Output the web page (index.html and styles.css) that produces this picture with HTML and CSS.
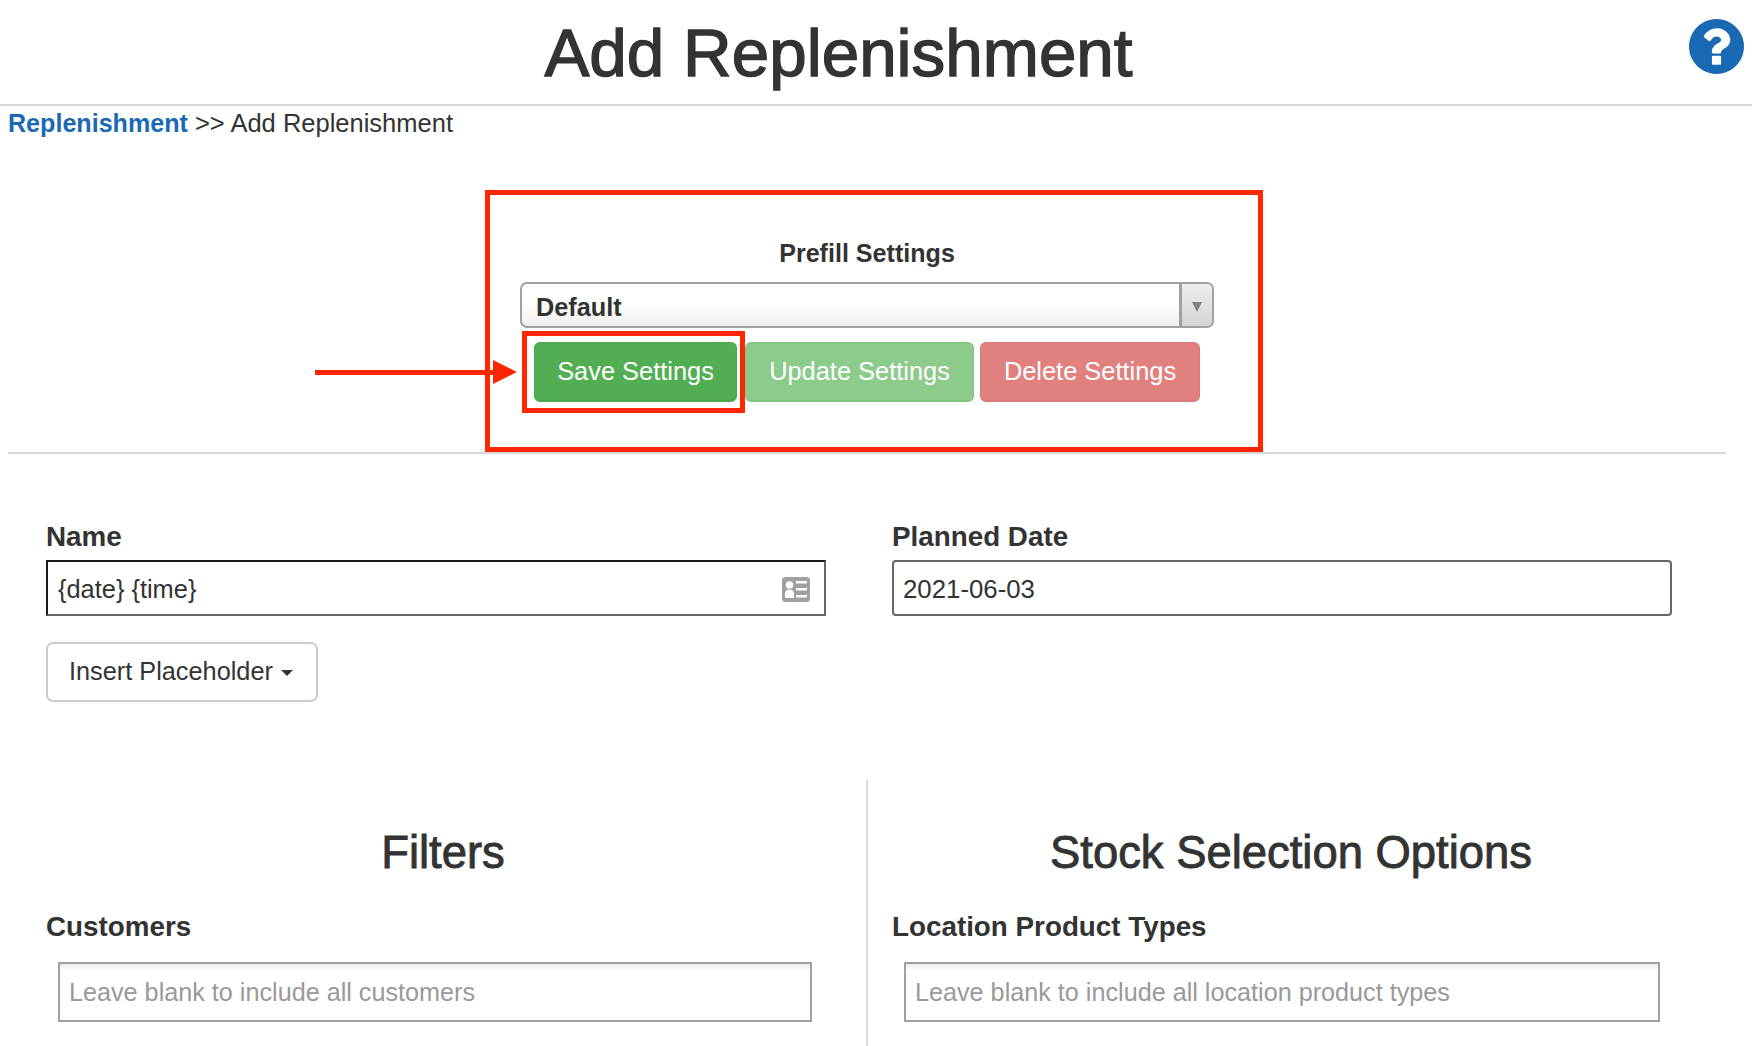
FILE: index.html
```html
<!DOCTYPE html>
<html lang="en">
<head>
<meta charset="utf-8">
<title>Add Replenishment</title>
<link rel="stylesheet" href="styles.css">
</head>
<body>
<div class="page">
  <header class="title-bar">
    <h1 class="page-title">Add Replenishment</h1>
    <a class="help" href="#" aria-label="Help">
      <svg class="help-icon" viewBox="128 128 1536 1536"><path d="M1024 1376v-192q0-14-9-23t-23-9h-192q-14 0-23 9t-9 23v192q0 14 9 23t23 9h192q14 0 23-9t9-23zm256-672q0-88-55.5-163t-138.5-116-170-41q-243 0-371 213-15 24 8 42l132 100q7 6 19 6 16 0 25-12 53-68 86-92 34-24 86-24 48 0 85.5 26t37.5 59q0 38-20 61t-68 45q-63 28-115.5 86.5t-52.5 125.5v36q0 14 9 23t23 9h192q14 0 23-9t9-23q0-19 21.5-49.5t54.5-49.5q32-18 49-28.5t46-35 44.5-48 28-60.5 12.5-81zm384 192q0 209-103 385.5t-279.5 279.5-385.5 103-385.5-103-279.5-279.5-103-385.5 103-385.5 279.5-279.5 385.5-103 385.5 103 279.5 279.5 103 385.5z"/></svg>
    </a>
  </header>

  <nav class="breadcrumb"><a href="#">Replenishment</a> &gt;&gt; Add Replenishment</nav>

  <main class="content">
    <section class="prefill">
      <div class="prefill-label">Prefill Settings</div>
      <div class="select">
        <span class="select-value">Default</span>
        <span class="select-arrow"><span class="select-caret"></span></span>
      </div>
      <div class="prefill-actions">
        <button class="btn btn-save" type="button">Save Settings</button>
        <button class="btn btn-update" type="button">Update Settings</button>
        <button class="btn btn-delete" type="button">Delete Settings</button>
      </div>
      <div class="callout callout-outer"></div>
      <div class="callout callout-inner"></div>
      <svg class="callout-arrow" viewBox="0 0 202 24"><rect x="0" y="10" width="182" height="5"/><path d="M178 0L202 12L178 24Z"/></svg>
    </section>

    <hr class="rule">

    <div class="fields">
      <div class="field">
        <label class="label">Name</label>
        <div class="input-wrap">
          <input class="text-input name-input" type="text" value="{date} {time}">
          <svg class="card-icon" viewBox="0 0 28 25"><rect width="28" height="25" rx="3.5" class="card-bg"/><circle cx="7.5" cy="8" r="3.8" class="card-fg"/><path class="card-fg" d="M3 21v-4.5c0-2.5 1.8-4 4.5-4s4.5 1.500 4.500 4V21z"/><rect x="14" y="4" width="11" height="2.500" class="card-fg"/><rect x="14" y="11" width="11" height="2.500" class="card-fg"/><rect x="14" y="18" width="11" height="2.500" class="card-fg"/></svg>
        </div>
        <button class="btn-default" type="button">Insert Placeholder <span class="caret"></span></button>
      </div>
      <div class="field">
        <label class="label">Planned Date</label>
        <input class="text-input date-input" type="text" value="2021-06-03">
      </div>
    </div>

    <div class="panels">
      <section class="panel panel-left">
        <h2 class="panel-title">Filters</h2>
        <label class="label panel-label">Customers</label>
        <input class="multi-input multi-left" type="text" placeholder="Leave blank to include all customers">
      </section>
      <section class="panel panel-right">
        <h2 class="panel-title">Stock Selection Options</h2>
        <label class="label panel-label">Location Product Types</label>
        <input class="multi-input multi-right" type="text" placeholder="Leave blank to include all location product types">
      </section>
    </div>
  </main>
</div>
</body>
</html>
```
FILE: styles.css
```css
* { box-sizing: border-box; }
html, body { margin: 0; padding: 0; background: #fff; }
body { font-family: "Liberation Sans", Arial, Helvetica, sans-serif; color: #333; font-size: 25.3px; }
.page { height: 1046px; overflow: hidden; display: flex; flex-direction: column; }

.title-bar { display: flex; align-items: flex-start; height: 106px; border-bottom: 2px solid #d8d8d8; padding-right: 8px; flex: none; }
.page-title { flex: 1; margin: 0; padding-top: 16px; text-align: center; font-size: 67.4px; line-height: 74px; font-weight: 400; color: #333; -webkit-text-stroke: 1.4px #333; padding-right: 12px; }
.help { display: block; margin-top: 19px; width: 55px; height: 55px; }
.help-icon { display: block; width: 55px; height: 55px; fill: #1a69b3; }

.breadcrumb { padding-left: 8px; height: 34px; line-height: 34px; font-size: 25.5px; color: #333; flex: none; }
.breadcrumb a { color: #1a69b3; font-weight: 700; font-size: 25.1px; text-decoration: none; }

.content { flex: 1; display: flex; flex-direction: column; padding: 0 26px 0 8px; min-height: 0; }

.prefill { position: relative; width: 694px; margin: 96px auto 0; flex: none; }
.prefill-label { text-align: center; font-weight: 700; font-size: 25.1px; line-height: 35px; height: 34px; margin-bottom: 12px; color: #333; }
.select { display: flex; height: 46px; border: 2px solid #a0a0a0; border-radius: 7px; background: linear-gradient(#fff 45%, #eee); }
.select-value { flex: 1; font-weight: 700; padding-left: 14px; line-height: 46px; color: #333; }
.select-arrow { width: 33px; border-left: 3px solid #a0a0a0; background: linear-gradient(#eee, #d4d4d4); border-radius: 0 5px 5px 0; display: flex; align-items: center; justify-content: center; padding-top: 3px; }
.select-caret { width: 0; height: 0; border-left: 5.5px solid transparent; border-right: 5.5px solid transparent; border-top: 10px solid #808080; }
.prefill-actions { display: flex; justify-content: center; gap: 8px; margin-top: 14px; padding-bottom: 50px; }
.btn { height: 60px; border: 1px solid transparent; border-bottom-width: 2px; border-radius: 6px; font: 25.4px "Liberation Sans", Arial, sans-serif; color: #fff; padding: 0; cursor: pointer; }
.btn-save { width: 203px; background: #51ae53; border-color: #4ca64e; }
.btn-update { width: 229px; background: #8ccb8c; border-color: #85c385; }
.btn-delete { width: 220px; margin-left: -2px; background: #e08180; border-color: #d97a79; }

.callout { position: absolute; border: 5px solid #ff2600; pointer-events: none; }
.callout-outer { left: -35px; top: -46px; width: 778px; height: 262px; }
.callout-inner { left: 2px; top: 95px; width: 223px; height: 82px; }
.callout-arrow { position: absolute; left: -205px; top: 124px; width: 202px; height: 24px; fill: #ff2600; }

.rule { margin: 0; border: 0; height: 2px; background: #d8d8d8; flex: none; }

.fields { display: grid; grid-template-columns: 780px 780px; column-gap: 66px; margin: 65px 0 0 38px; flex: none; }
.label { display: block; font-weight: 700; font-size: 27.8px; line-height: 36px; height: 34px; color: #333; }
.input-wrap { position: relative; }
.text-input { display: block; width: 100%; height: 56px; margin-top: 7px; padding: 2px 10px 0; font: 25.4px "Liberation Sans", Arial, sans-serif; color: #333; outline: 0; background: #fff; }
.name-input { border: 2px solid #666; border-top-color: #1c1c1c; border-left-color: #1c1c1c; border-radius: 0; }
.date-input { border: 2px solid #666; border-radius: 4px; padding-left: 9px; font-size: 25.8px; }
.card-icon { position: absolute; right: 16px; top: 17px; width: 28px; height: 25px; }
.card-bg { fill: #a0a0a0; }
.card-fg { fill: #fff; }
.btn-default { display: block; width: 272px; height: 60px; margin-top: 26px; padding: 0 0 2px 21px; text-align: left; background: #fff; border: 2px solid #ccc; border-radius: 7px; font: 25.3px "Liberation Sans", Arial, sans-serif; color: #333; cursor: pointer; }
.caret { display: inline-block; vertical-align: middle; margin-left: 1px; width: 0; height: 0; border-left: 6.5px solid transparent; border-right: 6.5px solid transparent; border-top: 6px solid #333; }

.panels { flex: 1; display: grid; grid-template-columns: 820px 824px; margin: 78px 0 0 38px; min-height: 0; }
.panel { padding-top: 48px; }
.panel-left { padding-right: 26px; }
.panel-right { border-left: 2px solid #d8d8d8; padding-left: 24px; }
.panel-title { margin: 0 0 31px; text-align: center; font-size: 45.4px; line-height: 50px; font-weight: 400; color: #333; -webkit-text-stroke: 0.9px #333; }
.panel-label { margin-bottom: 19px; }
.multi-input { display: block; height: 60px; padding: 0 9px 0; border: 2px solid #a0a0a0; border-radius: 0; font: 25.2px "Liberation Sans", Arial, sans-serif; color: #333; outline: 0; box-shadow: inset 0 6px 6px -4px #e4e4e4; }
.multi-input::placeholder { color: #999; opacity: 1; }
.multi-left { width: 754px; margin-left: 12px; }
.multi-right { width: 756px; margin-left: 12px; }
```
